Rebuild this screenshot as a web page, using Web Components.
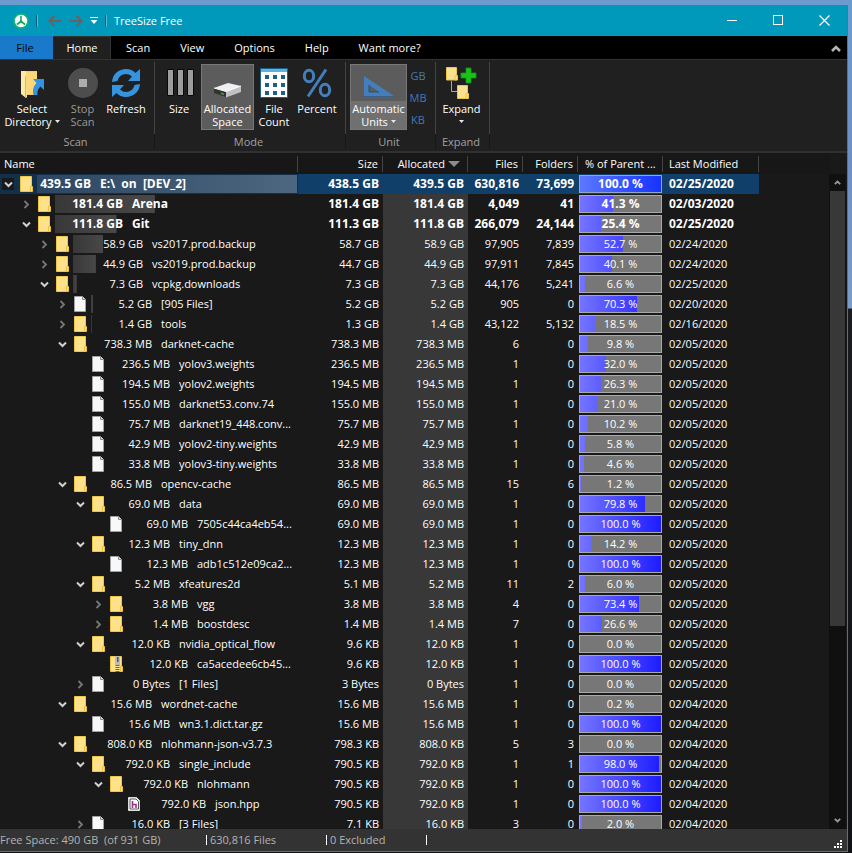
<!DOCTYPE html>
<html lang="en">
<head>
<meta charset="utf-8">
<title>TreeSize Free</title>
<style>
html, body { height: 100%; margin: 0; }
body {
  box-sizing: border-box;
  padding: 5px 4px 1px 0;
  overflow: hidden;
  font: 11px/14px "Open Sans", "Noto Sans", sans-serif;
  color: #fff;
  background: linear-gradient(#6c9bd0 0, #6d8fc4 160px, #7a9cc8 308px, #1b1c20 309px, #101114 100%);
}
</style>
</head>
<body>
<ts-window>
  <ts-titlebar slot="title" heading="TreeSize Free"></ts-titlebar>
  <ts-tabs slot="tabs"></ts-tabs>
  <ts-ribbon slot="ribbon">
    <ts-group label="Scan" style="--w:155px">
      <ts-tool icon="select" text="Select|Directory" drop style="--w:64px"></ts-tool>
      <ts-tool icon="stop" text="Stop|Scan" off style="--w:37px"></ts-tool>
      <ts-tool icon="refresh" text="Refresh" style="--w:50px"></ts-tool>
    </ts-group>
    <ts-group label="Mode" style="--w:191px;--p:2px">
      <ts-tool icon="size" text="Size" style="--w:44px"></ts-tool>
      <ts-tool icon="drive" text="Allocated|Space" on style="--w:53px"></ts-tool>
      <ts-tool icon="count" text="File|Count" style="--w:40px"></ts-tool>
      <ts-tool icon="percent" text="Percent" style="--w:46px"></ts-tool>
    </ts-group>
    <ts-group label="Unit" style="--w:90px;--p:4px">
      <ts-tool icon="units" text="Automatic|Units" drop on split style="--w:57px"></ts-tool>
      <ts-units></ts-units>
    </ts-group>
    <ts-group label="Expand" style="--w:54px;--p:1px">
      <ts-tool icon="expand" text="Expand|" drop style="--w:49px"></ts-tool>
    </ts-group>
  </ts-ribbon>
  <ts-grid slot="main"></ts-grid>
  <ts-scrollbar slot="scroll"></ts-scrollbar>
  <ts-status slot="status"></ts-status>
</ts-window>

<script>
const define = (name, render) => customElements.define(name, class extends HTMLElement {
  connectedCallback() {
    if (this.shadowRoot) return;
    this.attachShadow({ mode: 'open' }).innerHTML = render(this);
  }
});

const BUTTON = 'button{font:inherit;color:inherit;background:none;border:0;padding:0;margin:0;text-align:inherit}';

const ICONS = {
  logo: [16, 16, '<circle cx="8" cy="8" r="7" fill="#fff" stroke="#14b36b" stroke-width="1.6"/><path d="M8 3v5.500M8 8.500L3.800 11.500M8 8.500l4.200 3" stroke="#12a862" stroke-width="1.600" fill="none"/><circle cx="8" cy="8.500" r="1.400" fill="#12a862"/>'],
  back: [14, 12, '<path d="M13.500 6H1.500M6.500 .8L1.300 6l5.200 5.200" fill="none" stroke="#6a6260" stroke-width="2"/>'],
  forward: [14, 12, '<path d="M.5 6h12M7.500 .8L12.700 6l-5.200 5.200" fill="none" stroke="#6a6260" stroke-width="2"/>'],
  custom: [8, 7, '<path d="M0 .5h8" stroke="#fff"/><path d="M.5 3h7L4 7z" fill="#fff"/>'],
  min: [11, 11, '<path d="M0 5.500h10" stroke="#fff"/>'],
  max: [11, 11, '<rect x=".5" y=".5" width="9" height="9" fill="none" stroke="#fff"/>'],
  close: [11, 11, '<path d="M.5.5l10 10M10.500.5l-10 10" stroke="#fff" stroke-width="1.200"/>'],
  collapse: [10, 7, '<path d="M1 6l4-4 4 4" fill="none" stroke="#b4b4b4" stroke-width="2.600"/>'],
  tri: [5, 3, '<path d="M0 0h5L2.500 3z" fill="#e8e8e8"/>'],
  sort: [12, 6, '<path d="M0 0h12L6 6z" fill="#8c8c8c"/>'],
  select: [32, 32, '<path d="M5 4h16v24H8z" fill="#f7cd62"/><path d="M5 4h5l1 26-1 1-5-4z" fill="#ffe9a8"/><path d="M10 5h11v22H11z" fill="#fbd778"/><path d="M9.500 9v22" stroke="#e6b54a"/><path d="M17 12h11v11l-3.500-3.500c-2.500 2-3.500 5-3 8.500h-4c-1.200-5 0-9 3-12z" fill="#3293e2"/>'],
  stop: [32, 32, '<circle cx="16" cy="16" r="15" fill="#4d4d4d"/><path d="M12 12h8v8h-8z" fill="#adadad"/>'],
  refresh: [32, 32, '<path d="M2 15C2.500 7 9 2 16 2c4 0 7 1.500 9.500 4L30 2v12H18l4-4.500C20 7.800 18 7 16 7c-4.500 0-7.500 3-8.500 7z" fill="#3594e0"/><path d="M30 17c-.5 8-7 13-14 13-4 0-7-1.500-9.500-4L2 30V18h12l-4 4.500c2 1.700 4 2.500 6 2.500 4.500 0 7.500-3 8.500-7z" fill="#3594e0"/>'],
  size: [32, 32, '<g fill="#9d9d9d" stroke="#080808"><path d="M4.500 2.500h6v26h-6zM14.500 2.500h6v26h-6zM24.500 2.500h6v26h-6z"/></g>'],
  drive: [32, 32, '<path d="M2 21l14-5 13 3-13 6z" fill="#f0f0f2"/><path d="M2 21l12 3.500V30L2 26z" fill="#303532"/><path d="M14 24.500L29 19v6l-15 5.500z" fill="#bfc0c4"/><path d="M2 21l12 3.500 15-5.500" fill="none" stroke="#fff"/><path d="M9 25.500l3 1v1.500l-3-1z" fill="#33b52e"/>'],
  count: [32, 32, '<path d="M2.500 1.500h27v29h-27z" fill="#fff" stroke="#1f5f86"/><path d="M3 2h26v3H3z" fill="#58b4e4"/><g fill="#1f5f86"><path d="M7 8h4v4H7zM15 8h4v4h-4zM23 8h4v4h-4zM7 16h4v4H7zM15 16h4v4h-4zM23 16h4v4h-4zM7 24h4v4H7zM15 24h4v4h-4zM23 24h4v4h-4z"/></g>'],
  percent: [32, 32, '<g fill="none" stroke="#447fbd" stroke-width="3"><ellipse cx="8" cy="9" rx="4.700" ry="5.700"/><ellipse cx="24" cy="23" rx="4.700" ry="5.700"/><path d="M25 2.500L7 29.500"/></g>'],
  units: [32, 32, '<path fill-rule="evenodd" d="M1 9v20h30zM6 18l10 7H6z" fill="#447fbd"/><path d="M6 18v7h10" fill="none" stroke="#2c4f74"/><path d="M1 29.500h30" stroke="#3b5f86"/>'],
  expand: [32, 32, '<path d="M5.500 14v10.500H11" fill="none" stroke="#a8a8a8"/><g fill="#fbe28e" stroke="#eec544"><path d="M.5.5h10v12.500H.5z"/><path d="M9 8.500h2.500V13H9z"/><path d="M11.500 18.500h10v13h-10z"/><path d="M20 26.500h2.500v5H20z"/></g><path d="M20 1h5v5h5v5h-5v5h-5v-5h-5V6h5z" fill="#18c218" stroke="#0c9a0c" stroke-width=".8"/>'],
  folder: [13, 16, '<path d="M.5.500h11v15H.5z" fill="#ffe18a" stroke="#f0c64a"/><path d="M10.500 10.500h2v5h-2z" fill="#ffe18a" stroke="#edc040"/>'],
  file: [13, 16, '<path d="M.5.500h8l3 3v12H.5z" fill="#f7f8fa" stroke="#a3a3a3"/><path d="M8.500.500v3h3" fill="#ddd" stroke="#8a8a8a"/>'],
  zip: [13, 16, '<path d="M.5.500h11v15H.5z" fill="#ffe18a" stroke="#f0c64a"/><path d="M10.500 10.500h2v5h-2z" fill="#ffe18a" stroke="#edc040"/><path d="M5 0h5v9H5z" fill="#b9bcc0"/><path d="M7 1h1.500v5H7z" fill="#555"/><path d="M6.500 9v7M8.500 9v7" stroke="#666" stroke-dasharray="1 1" stroke-width="2"/>'],
  hpp: [13, 16, '<path d="M.5 1.500h8l3 3v10H.5z" fill="#fff" stroke="#ddd"/><path d="M2 3h6l2.500 2.500V13H2z" fill="none" stroke="#555"/><path d="M4.500 5v7M4.500 8.500H8V12" fill="none" stroke="#9b2f8c" stroke-width="1.600"/>'],
  open: [9, 7, '<path d="M1 1.500l3.500 3.500L8 1.500" fill="none" stroke="#d0d0d0" stroke-width="2"/>'],
  shut: [7, 9, '<path d="M1.500 1L5 4.500 1.500 8" fill="none" stroke="#777" stroke-width="1.800"/>'],
  up: [7, 5, '<path d="M.8 4.200l2.700-2.700 2.700 2.700" fill="none" stroke="#999" stroke-width="1.800"/>'],
  down: [7, 5, '<path d="M.8.800l2.700 2.700L6.200.800" fill="none" stroke="#999" stroke-width="1.800"/>'],
  grip: [8, 8, '<path d="M6 0h2v2H6zM3 3h2v2H3zM6 3h2v2H6zM0 6h2v2H0zM3 6h2v2H3zM6 6h2v2H6z" fill="#fff"/>']
};

define('ts-icon', el => {
  const [w, h, body] = ICONS[el.getAttribute('name')];
  return `<style>:host{display:inline-block;flex:none;line-height:0}svg{display:block}</style>
  <svg width="${w}" height="${h}" viewBox="0 0 ${w} ${h}" aria-hidden="true">${body}</svg>`;
});

define('ts-window', () => `<style>
  :host{display:flex;flex-direction:column;height:100%;box-sizing:border-box;background:#191919;
    border:solid #0094b4;border-width:0 1px 1px 0}
  .body{flex:1;min-height:0;display:flex;overflow:hidden}
  </style><slot name="title"></slot><slot name="tabs"></slot><slot name="ribbon"></slot>
  <div class="body"><slot name="main"></slot><slot name="scroll"></slot></div><slot name="status"></slot>`);

define('ts-titlebar', el => `<style>${BUTTON}
  :host{display:flex;align-items:center;height:31px;background:#0099bc;padding-left:13px}
  .quick{display:flex;align-items:center;gap:7px}
  i{width:1px;height:12px;background:#08607a;border-right:1px solid #58bcd2}
  .history{display:flex;gap:7px;padding-left:3px}
  button{display:flex;align-items:center;justify-content:center}
  h1{font:inherit;margin:0 0 0 7px}
  .controls{margin-left:auto;display:flex}
  .controls button{width:46px;height:31px}
  </style>
  <div class="quick"><ts-icon name="logo"></ts-icon><i></i>
  <div class="history"><button aria-label="Back"><ts-icon name="back"></ts-icon></button>
  <button aria-label="Forward"><ts-icon name="forward"></ts-icon></button></div>
  <button aria-label="Customize"><ts-icon name="custom"></ts-icon></button><i></i></div>
  <h1>${el.getAttribute('heading')}</h1>
  <div class="controls"><button aria-label="Minimize"><ts-icon name="min"></ts-icon></button>
  <button aria-label="Maximize"><ts-icon name="max"></ts-icon></button>
  <button aria-label="Close"><ts-icon name="close"></ts-icon></button></div>`);

define('ts-tabs', () => `<style>${BUTTON}
  :host{display:flex;height:23px;background:#000}
  button{padding:0 15px;text-align:center}
  .file{background:#1979ca;color:#000;width:53px;padding:0 3px 0 0}
  .active{background:#202020;box-shadow:inset -1px 1px #333;width:58px;padding:0}
  .collapse{margin-left:auto;padding:0 6px}
  </style><button class="file">File</button><button class="active">Home</button>
  ${['Scan', 'View', 'Options', 'Help', 'Want more?'].map(t => `<button>${t}</button>`).join('')}
  <button class="collapse" aria-label="Collapse ribbon"><ts-icon name="collapse"></ts-icon></button>`);

define('ts-ribbon', () => `<style>:host{display:flex;height:94px;box-sizing:border-box;background:#202020;
  border-top:1px solid #333;border-bottom:2px solid #303030;padding-top:2px}</style><slot></slot>`);

define('ts-group', el => `<style>
  :host{display:flex;flex-direction:column;width:var(--w);flex:none}
  .tools{display:flex;align-items:flex-start;height:70px;padding:2px 0 0 var(--p,0);border-right:1px solid #444}
  .label{text-align:center;color:#a0a0a0;line-height:15px;border-right:1px solid #171717;padding-right:3px}
  </style><div class="tools"><slot></slot></div><div class="label">${el.getAttribute('label')}</div>`);

define('ts-tool', el => {
  const lines = el.getAttribute('text').split('|');
  const tri = el.hasAttribute('drop') ? '<ts-icon name="tri"></ts-icon>' : '';
  return `<style>${BUTTON}
  :host{display:block;width:var(--w);height:66px}
  button{width:100%;height:66px;box-sizing:border-box;border:1px solid transparent;padding-top:2px;
    display:flex;flex-direction:column;align-items:center;white-space:nowrap}
  :host([on]) button{background:#5c5c5c;border-color:#777}
  :host([split]) button{background:linear-gradient(#5c5c5c 36px,#707070 36px)}
  :host([off]) button{color:#9a9a9a}
  button>ts-icon{margin-bottom:3px}
  span{display:flex;align-items:center;justify-content:center;gap:3px;line-height:13px;min-height:13px}
  </style><button>
  <ts-icon name="${el.getAttribute('icon')}"></ts-icon>
  ${lines.map((l, n) => `<span>${l}${n === lines.length - 1 ? tri : ''}</span>`).join('')}</button>`;
});

define('ts-units', () => `<style>${BUTTON}
  :host{display:flex;flex-direction:column;width:22px;padding-top:1px}
  button{height:22px;text-align:center;color:#4479b4}
  </style><button>GB</button><button>MB</button><button>KB</button>`);

define('ts-percent', el => {
  const v = el.getAttribute('value');
  return `<style>
  :host{display:block;height:18px;box-sizing:border-box;border:1px solid #aaa;text-align:center;line-height:16px;
    --a:#7474ff;--b:#1d1dff;
    background:linear-gradient(90deg,transparent ${v}%,#777 ${v}%),linear-gradient(90deg,var(--a),var(--b))}
  :host([selected]){--a:#5c78ff;--b:#1633ff;border-color:#90a8c0}
  </style>${v} %`;
});

/* level, kind (d folder, f file, z archive, h header), state (o open, c closed, - none),
   allocated, name, size, files, folders, percent, modified */
const ROWS = `0|d|o|439.5 GB|E:\\  on  [DEV_2]|438.5 GB|630,816|73,699|100.0|02/25/2020
1|d|c|181.4 GB|Arena|181.4 GB|4,049|41|41.3|02/03/2020
1|d|o|111.8 GB|Git|111.3 GB|266,079|24,144|25.4|02/25/2020
2|d|c|58.9 GB|vs2017.prod.backup|58.7 GB|97,905|7,839|52.7|02/24/2020
2|d|c|44.9 GB|vs2019.prod.backup|44.7 GB|97,911|7,845|40.1|02/24/2020
2|d|o|7.3 GB|vcpkg.downloads|7.3 GB|44,176|5,241|6.6|02/25/2020
3|f|c|5.2 GB|[905 Files]|5.2 GB|905|0|70.3|02/20/2020
3|d|c|1.4 GB|tools|1.3 GB|43,122|5,132|18.5|02/16/2020
3|d|o|738.3 MB|darknet-cache|738.3 MB|6|0|9.8|02/05/2020
4|f|-|236.5 MB|yolov3.weights|236.5 MB|1|0|32.0|02/05/2020
4|f|-|194.5 MB|yolov2.weights|194.5 MB|1|0|26.3|02/05/2020
4|f|-|155.0 MB|darknet53.conv.74|155.0 MB|1|0|21.0|02/05/2020
4|f|-|75.7 MB|darknet19_448.conv...|75.7 MB|1|0|10.2|02/05/2020
4|f|-|42.9 MB|yolov2-tiny.weights|42.9 MB|1|0|5.8|02/05/2020
4|f|-|33.8 MB|yolov3-tiny.weights|33.8 MB|1|0|4.6|02/05/2020
3|d|o|86.5 MB|opencv-cache|86.5 MB|15|6|1.2|02/05/2020
4|d|o|69.0 MB|data|69.0 MB|1|0|79.8|02/05/2020
5|f|-|69.0 MB|7505c44ca4eb54...|69.0 MB|1|0|100.0|02/05/2020
4|d|o|12.3 MB|tiny_dnn|12.3 MB|1|0|14.2|02/05/2020
5|f|-|12.3 MB|adb1c512e09ca2...|12.3 MB|1|0|100.0|02/05/2020
4|d|o|5.2 MB|xfeatures2d|5.1 MB|11|2|6.0|02/05/2020
5|d|c|3.8 MB|vgg|3.8 MB|4|0|73.4|02/05/2020
5|d|c|1.4 MB|boostdesc|1.4 MB|7|0|26.6|02/05/2020
4|d|o|12.0 KB|nvidia_optical_flow|9.6 KB|1|0|0.0|02/05/2020
5|z|-|12.0 KB|ca5acedee6cb45...|9.6 KB|1|0|100.0|02/05/2020
4|f|c|0 Bytes|[1 Files]|3 Bytes|1|0|0.0|02/05/2020
3|d|o|15.6 MB|wordnet-cache|15.6 MB|1|0|0.2|02/04/2020
4|f|-|15.6 MB|wn3.1.dict.tar.gz|15.6 MB|1|0|100.0|02/04/2020
3|d|o|808.0 KB|nlohmann-json-v3.7.3|798.3 KB|5|3|0.0|02/04/2020
4|d|o|792.0 KB|single_include|790.5 KB|1|1|98.0|02/04/2020
5|d|o|792.0 KB|nlohmann|790.5 KB|1|0|100.0|02/04/2020
6|h|-|792.0 KB|json.hpp|790.5 KB|1|0|100.0|02/04/2020
4|f|c|16.0 KB|[3 Files]|7.1 KB|3|0|2.0|02/04/2020`.split('\n').map(r => r.split('|'));

const KIND = { d: 'folder', f: 'file', z: 'zip', h: 'hpp' };

define('ts-node', el => {
  const level = +el.getAttribute('level');
  const state = el.getAttribute('state');
  const alloc = el.getAttribute('alloc');
  const share = alloc.endsWith('GB') ? parseFloat(alloc) / 439.5 * 100 : 0;
  return `<style>${BUTTON}
  :host{display:flex;height:20px;align-items:center;padding-left:${level * 18}px;margin-right:1px}
  .toggle{width:20px;flex:none;display:flex;padding-left:2px;box-sizing:border-box}
  .toggle button{width:12px;height:12px;display:flex;align-items:center;justify-content:center}
  :host([selected]) .toggle button{background:#191919}
  .bar{flex:1;height:18px;line-height:18px;margin-left:4px;display:flex;gap:9px;min-width:0;white-space:pre;
    background:linear-gradient(90deg,#383838,#484848) no-repeat 0 0/${share}% 100%}
  :host([selected]) .bar{background-image:linear-gradient(90deg,#2c4763,#4e6780)}
  .size{flex:none;text-align:right;width:${[54, 68, 70][level] || 61}px}
  </style><span class="toggle">${state === '-' ? '' : `<button aria-label="${state === 'o' ? 'Collapse' : 'Expand'}"><ts-icon name="${state === 'o' ? 'open' : 'shut'}"></ts-icon></button>`}</span>
  <ts-icon name="${KIND[el.getAttribute('kind')]}"></ts-icon>
  <div class="bar"><span class="size">${alloc}</span><span>${el.getAttribute('name')}</span></div>`;
});

define('ts-grid', () => `<style>${BUTTON}
  :host{display:block;flex:1;min-width:0;overflow:hidden}
  table{width:100%;table-layout:fixed;border-collapse:collapse}
  .name{width:298px}.val{width:85px}.cnt{width:55px}.mod{width:96px}
  th,td{padding:0;font-weight:inherit;text-align:left;white-space:nowrap}
  thead tr{height:21px;background:#171717}
  th>div{height:16px;line-height:16px;border-right:1px solid #444;display:flex;margin-top:1px}
  th:last-child>div{border:0}
  th button{padding:0 4px;display:flex;align-items:center;gap:3px}
  th.n button{margin-left:auto}
  th.a button{padding-right:7px}
  td{height:20px}
  td.n{text-align:right;padding-right:4px}
  td.a{background:#383838}
  td.p{padding:0 1px}
  td.m,th.m button{padding-left:6px}
  th.p button{padding-left:7px}
  tr.strong{font-weight:700;font-size:12px}
  tr.sel td{background:#10406a}
  tr.sel td:first-child{background:#12304c}
  tr.sel td:last-child{background:none}
  </style><table><colgroup><col class="name"><col class="val"><col class="val"><col class="cnt"><col class="cnt"><col class="val"><col class="mod"><col></colgroup>
  <thead><tr><th><div><button>Name</button></div></th><th class="n"><div><button>Size</button></div></th>
  <th class="n a"><div><button>Allocated<ts-icon name="sort"></ts-icon></button></div></th>
  <th class="n"><div><button>Files</button></div></th><th class="n"><div><button>Folders</button></div></th>
  <th class="p"><div><button>% of Parent ...</button></div></th><th class="m"><div><button>Last Modified</button></div></th><th><div></div></th></tr></thead>
  <tbody>${ROWS.map(([lv, kind, st, alloc, name, size, files, dirs, pct, mod], n) => {
    const s = n === 0 ? ' selected' : '';
    return `<tr class="${n < 3 ? 'strong' : ''}${s ? ' sel' : ''}">
    <td><ts-node level="${lv}" kind="${kind}" state="${st}" alloc="${alloc}" name="${name}"${s}></ts-node></td>
    <td class="n">${size}</td><td class="n a">${alloc}</td><td class="n">${files}</td><td class="n">${dirs}</td>
    <td class="p"><ts-percent value="${pct}"${s}></ts-percent></td><td class="m">${mod}</td><td></td></tr>`;
  }).join('')}</tbody></table>`);

define('ts-scrollbar', () => `<style>${BUTTON}
  :host{display:flex;flex-direction:column;width:17px;flex:none;margin:21px 1px 0 0;background:#101010}
  button{height:17px;display:flex;align-items:center;justify-content:center}
  .track{flex:1;padding:0 1px}
  .thumb{height:70%;background:#383838}
  </style><button aria-label="Scroll up"><ts-icon name="up"></ts-icon></button><div class="track"><div class="thumb"></div></div>
  <button aria-label="Scroll down"><ts-icon name="down"></ts-icon></button>`);

define('ts-status', () => `<style>
  :host{display:flex;height:22px;background:#333;color:#b4b4b4;align-items:center;white-space:pre;flex:none}
  span{box-sizing:border-box;width:120px;padding-left:3px;line-height:10px;border-left:1px solid #fff}
  .space{width:206px;padding:0;border:0}
  .excluded{width:100px}
  .end{width:4px;height:10px}
  ts-icon{margin:8px 5px 0 auto}
  </style><span class="space">Free Space: 490 GB  (of 931 GB)</span><span>630,816 Files</span><span class="excluded">0 Excluded</span><span class="end"></span><ts-icon name="grip"></ts-icon>`);
</script>
</body>
</html>
